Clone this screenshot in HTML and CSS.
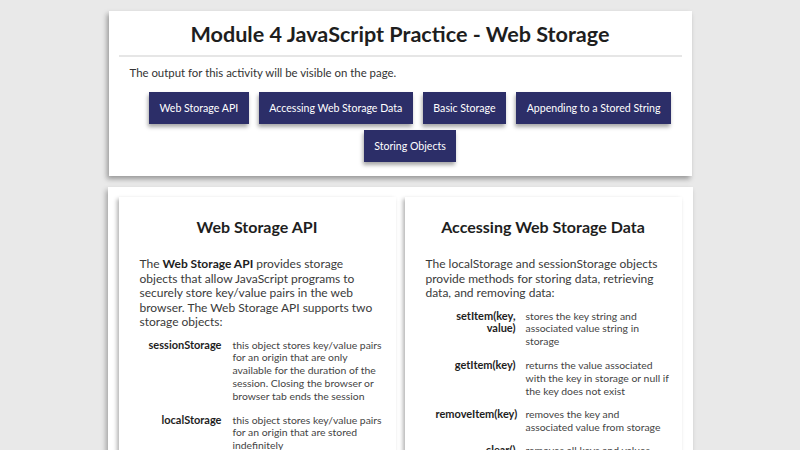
FILE: index.html
```html
<!DOCTYPE html>
<html lang="en">
<head>
<meta charset="utf-8">
<title>Module 4 JavaScript Practice - Web Storage</title>
<link rel="stylesheet" href="styles.css">
</head>
<body>
<header class="top">
  <h1 class="title">Module 4 JavaScript Practice - Web Storage</h1>
  <hr class="rule">
  <p class="intro">The output for this activity will be visible on the page.</p>
  <nav class="buttons">
    <button class="btn">Web Storage API</button>
    <button class="btn">Accessing Web Storage Data</button>
    <button class="btn">Basic Storage</button>
    <button class="btn">Appending to a Stored String</button>
    <button class="btn">Storing Objects</button>
  </nav>
</header>
<main class="panel">
  <section class="card">
    <h2 class="card-title">Web Storage API</h2>
    <p class="card-text">The <b>Web Storage API</b> provides storage objects that allow JavaScript programs to securely store key/value pairs in the web browser. The Web Storage API supports two storage objects:</p>
    <dl class="defs defs-a">
      <dt>sessionStorage</dt>
      <dd>this object stores key/value pairs for an origin that are only available for the duration of the session. Closing the browser or browser tab ends the session</dd>
      <dt>localStorage</dt>
      <dd>this object stores key/value pairs for an origin that are stored indefinitely</dd>
    </dl>
    <p class="card-text">Both objects are properties of the window object.</p>
  </section>
  <section class="card">
    <h2 class="card-title">Accessing Web Storage Data</h2>
    <p class="card-text">The localStorage and sessionStorage objects provide methods for storing data, retrieving data, and removing data:</p>
    <dl class="defs defs-b">
      <dt>setItem(key, value)</dt>
      <dd>stores the key string and associated value string in storage</dd>
      <dt>getItem(key)</dt>
      <dd>returns the value associated with the key in storage or null if the key does not exist</dd>
      <dt>removeItem(key)</dt>
      <dd>removes the key and associated&nbsp;value from storage</dd>
      <dt>clear()</dt>
      <dd>removes all keys and values from storage</dd>
    </dl>
  </section>
</main>
</body>
</html>
```
FILE: styles.css
```css
* { box-sizing: border-box; }

body {
  margin: 0;
  background: #e9e9e9;
  font-family: Lato, "Open Sans", sans-serif;
  color: #2a2a2a;
}

.top {
  width: 583px;
  margin: 11px auto 0;
  background: #fff;
  box-shadow: -2px 3px 5px rgba(0, 0, 0, 0.35);
  padding: 10px 10px 14px;
}

.title {
  margin: 0;
  text-align: center;
  font-size: 21.6px;
  line-height: 26px;
  font-weight: 700;
  color: #1e1e1e;
}

.rule {
  margin: 8px 0 0;
  border: 0;
  border-top: 2px solid #e6e6e6;
}

.intro {
  margin: 8px 0 0 11px;
  font-size: 11.4px;
  line-height: 16px;
  color: #333;
}

.buttons {
  display: flex;
  flex-wrap: wrap;
  justify-content: center;
  gap: 6px 10px;
  margin: 11px 0 0;
  padding: 0 0 0 20px;
}

.btn {
  height: 32px;
  padding: 0 10.5px;
  border: 0;
  background: #2c2e68;
  color: #fff;
  font-family: inherit;
  font-size: 10.6px;
  white-space: nowrap;
  box-shadow: -1px 3px 4px rgba(0, 0, 0, 0.35);
}

.panel {
  width: 585px;
  margin: 11px auto 0;
  background: #fff;
  box-shadow: -2px 3px 5px rgba(0, 0, 0, 0.3);
  padding: 10px 10px 10px 11px;
  display: grid;
  grid-template-columns: 277px 277px;
  column-gap: 9px;
}

.card {
  background: #fff;
  box-shadow: -2px 2px 4px rgba(0, 0, 0, 0.3);
  padding: 20px 10px 20px 21px;
}

.card-title {
  margin: 0;
  text-align: center;
  font-size: 16px;
  line-height: 20px;
  font-weight: 700;
  color: #1e1e1e;
  padding-right: 11px;
}

.card-text {
  margin: 20px 0 0;
  padding-right: 6px;
  font-size: 12px;
  line-height: 14.5px;
  color: #3a3a3a;
}

.card-text b { color: #1e1e1e; }

.defs {
  display: grid;
  column-gap: 11px;
  row-gap: 10.5px;
  margin: 9px 0 0 9px;
  font-size: 10.4px;
  line-height: 12.9px;
  color: #444;
}

.defs-a { grid-template-columns: 73px 1fr; }
.defs-b { grid-template-columns: 80px 1fr; column-gap: 10px; margin-left: 10px; }

.defs dt {
  text-align: right;
  font-weight: 700;
  font-size: 11px;
  color: #1e1e1e;
}

.defs dd { margin: 0; }
```
